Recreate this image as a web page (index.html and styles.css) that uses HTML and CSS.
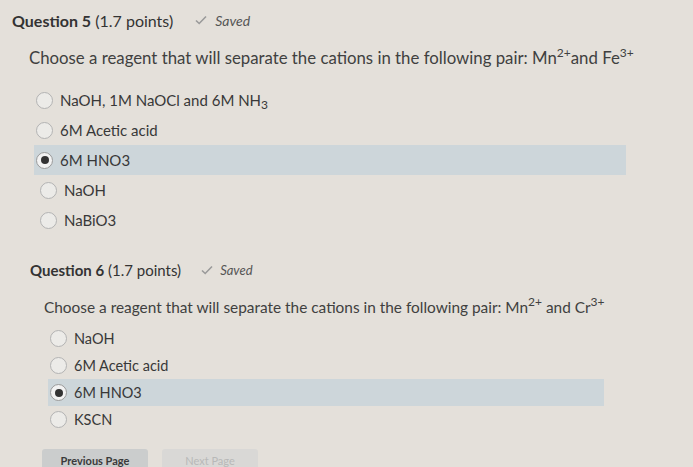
FILE: index.html
```html
<!DOCTYPE html>
<html>
<head>
<meta charset="utf-8">
<link rel="stylesheet" href="styles.css">
</head>
<body>
<div class="page">
  <section class="question q5">
    <header class="qhead">
      <h2 class="qtitle"><b>Question 5</b> (1.7 points)</h2>
      <span class="saved"><svg class="check" viewBox="0 0 12 10" width="12" height="10"><path d="M1 5.5 L4.2 8.5 L11 1.5" fill="none" stroke="#9a9a9a" stroke-width="1.6"/></svg><i>Saved</i></span>
    </header>
    <p class="prompt">Choose a reagent that will separate the cations in the following pair: Mn<sup>2+</sup>and Fe<sup>3+</sup></p>
    <ul class="options">
      <li class="opt"><span class="radio"></span><span>NaOH, 1M NaOCl and 6M NH<sub>3</sub></span></li>
      <li class="opt"><span class="radio"></span><span>6M Acetic acid</span></li>
      <li class="opt sel"><span class="radio on"></span><span>6M HNO3</span></li>
      <li class="opt"><span class="radio"></span><span>NaOH</span></li>
      <li class="opt"><span class="radio"></span><span>NaBiO3</span></li>
    </ul>
  </section>
  <section class="question q6">
    <header class="qhead">
      <h2 class="qtitle"><b>Question 6</b> (1.7 points)</h2>
      <span class="saved"><svg class="check" viewBox="0 0 12 10" width="12" height="10"><path d="M1 5.5 L4.2 8.5 L11 1.5" fill="none" stroke="#9a9a9a" stroke-width="1.6"/></svg><i>Saved</i></span>
    </header>
    <p class="prompt">Choose a reagent that will separate the cations in the following pair: Mn<sup>2+</sup> and Cr<sup>3+</sup></p>
    <ul class="options">
      <li class="opt"><span class="radio"></span><span>NaOH</span></li>
      <li class="opt"><span class="radio"></span><span>6M Acetic acid</span></li>
      <li class="opt sel"><span class="radio on"></span><span>6M HNO3</span></li>
      <li class="opt"><span class="radio"></span><span>KSCN</span></li>
    </ul>
  </section>
  <nav class="pager">
    <button class="btn prev">Previous Page</button>
    <button class="btn next">Next Page</button>
  </nav>
</div>
</body>
</html>
```
FILE: styles.css
```css
* { box-sizing: border-box; }
html, body { margin: 0; padding: 0; }
body {
  background: #e4e0da;
  font-family: Lato, "Open Sans", sans-serif;
  color: #3a3a3a;
  width: 693px;
  height: 467px;
  overflow: hidden;
}
.page { display: flex; flex-direction: column; }
.question { display: flex; flex-direction: column; }
.qhead { display: flex; align-items: center; gap: 22px; height: 24px; }
.qtitle { margin: 0; font-size: 16px; font-weight: 400; color: #333; }
.qtitle b { font-weight: 700; }
.saved { display: flex; align-items: center; gap: 8px; font-size: 14px; color: #555; }
.check { display: block; }
.prompt { margin: 0; font-size: 16.8px; color: #404040; }
sup, sub { font-size: 12px; line-height: 0; }
sup { vertical-align: 7px; }
sub { vertical-align: -3px; }
.options { list-style: none; margin: 0; padding: 0; display: flex; flex-direction: column; }
.opt { display: flex; align-items: center; gap: 7px; font-size: 15px; color: #383838; }
.radio {
  width: 17px; height: 17px; border-radius: 50%;
  border: 1px solid #b3b3b3; background: #ecebe8;
  display: inline-flex; align-items: center; justify-content: center;
  flex: none;
}
.radio.on { border-color: #9a9a9a; background: #f2f2f2; }
.radio.on::after { content: ""; width: 8px; height: 8px; border-radius: 50%; background: #333; }

.q5 { padding: 8px 0 0 12px; }
.q5 .prompt { margin: 14px 0 0 17px; line-height: 24px; }
.q5 .options { margin: 15px 0 0 22px; width: 592px; }
.q5 .opt { height: 30px; padding-left: 2px; }
.q5 .opt:nth-child(4), .q5 .opt:nth-child(5) { padding-left: 6px; }
.opt.sel { background: #cdd6da; }

.q6 { padding: 23px 0 0 30px; }
.q6 .qtitle { font-size: 15px; }
.q6 .saved { font-size: 13px; gap: 7px; }
.q6 .qhead { gap: 20px; }
.q6 .prompt { margin: 13px 0 0 14px; line-height: 24px; font-size: 15.4px; }
.q6 .options { margin: 6px 0 0 18px; width: 556px; }
.q6 .opt { height: 27px; padding-left: 2px; font-size: 14.5px; }

.pager { display: flex; gap: 14px; margin: 16px 0 0 42px; }
.btn {
  font-family: Lato, sans-serif; font-size: 11px; font-weight: 700;
  height: 20px; border: none; border-radius: 3px 3px 0 0;
  padding: 5px 0 0; display: flex; justify-content: center; align-items: flex-start;
  line-height: 13px;
}
.prev { width: 106px; background: #cbcdcd; color: #3a3a3a; }
.next { width: 96px; background: #d9d8d6; color: #b8b8b8; font-weight: 400; }
```
